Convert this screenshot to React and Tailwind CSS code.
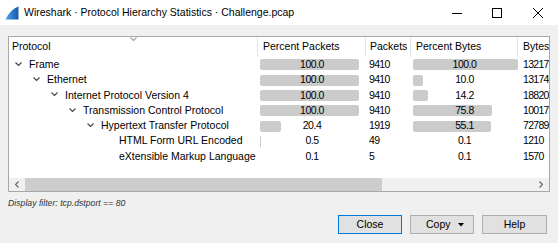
import React from "react";

const rows = [
  { name: "Frame", level: 0, exp: true, pp: "100.0", ppw: 99, pk: "9410", pb: "100.0", pbw: 105, b: "13217842" },
  { name: "Ethernet", level: 1, exp: true, pp: "100.0", ppw: 99, pk: "9410", pb: "10.0", pbw: 10, b: "1317400" },
  { name: "Internet Protocol Version 4", level: 2, exp: true, pp: "100.0", ppw: 99, pk: "9410", pb: "14.2", pbw: 15, b: "1882000" },
  { name: "Transmission Control Protocol", level: 3, exp: true, pp: "100.0", ppw: 99, pk: "9410", pb: "75.8", pbw: 79, b: "10017530" },
  { name: "Hypertext Transfer Protocol", level: 4, exp: true, pp: "20.4", ppw: 21, pk: "1919", pb: "55.1", pbw: 78, b: "7278906" },
  { name: "HTML Form URL Encoded", level: 5, exp: false, pp: "0.5", ppw: 0.6, pk: "49", pb: "0.1", pbw: 0, b: "1210" },
  { name: "eXtensible Markup Language", level: 5, exp: false, pp: "0.1", ppw: 0, pk: "5", pb: "0.1", pbw: 0, b: "1570" },
];

const indent = ["pl-[6px]", "pl-[24px]", "pl-[42px]", "pl-[60px]", "pl-[78px]", "pl-[96px]"];

const gridCols = "grid grid-cols-[249px_108px_45px_107px_1fr]";

function Chevron({ color = "#444" }) {
  return (
    <svg width="7" height="4" viewBox="0 0 7 4" className="block">
      <polyline points="0.5,0.5 3.5,3.5 6.5,0.5" fill="none" stroke={color} strokeWidth="1.1" />
    </svg>
  );
}

function Fin() {
  return (
    <svg width="14" height="14" viewBox="0 0 14 14" className="block">
      <defs>
        <linearGradient id="fing" x1="0" y1="0" x2="1" y2="0">
          <stop offset="0" stopColor="#5aa6e6" />
          <stop offset="0.55" stopColor="#2a78cc" />
          <stop offset="1" stopColor="#1a5aa8" />
        </linearGradient>
      </defs>
      <path d="M0.5 13.5 C 3 8, 7 3, 13.5 0.5 L 13.5 13.5 Z" fill="url(#fing)" />
    </svg>
  );
}

function Bar({ w }) {
  return (
    <div
      className="col-start-1 row-start-1 self-center ml-[2px] h-[11px] bg-[#cbcbcb] rounded-[2px]"
      style={{ width: `${w}px` }}
    />
  );
}

export default function App() {
  return (
    <div
      className="w-[558px] h-[243px] bg-[#f0f0f0] flex flex-col overflow-hidden text-black text-[10.5px]"
      style={{ fontFamily: '"Liberation Sans", Arial, sans-serif' }}
    >
      {/* Title bar */}
      <div className="h-[25px] bg-white flex items-center shrink-0">
        <div className="ml-[5px]">
          <Fin />
        </div>
        <div className="ml-[5px] text-[10.5px] leading-none">
          Wireshark · Protocol Hierarchy Statistics · Challenge.pcap
        </div>
        <div className="flex-1" />
        <div className="w-[40px] h-full flex items-center justify-center">
          <svg width="10" height="10" viewBox="0 0 10 10" className="block">
            <line x1="0" y1="5.5" x2="10" y2="5.5" stroke="#000" strokeWidth="1" />
          </svg>
        </div>
        <div className="w-[40px] h-full flex items-center justify-center">
          <svg width="10" height="10" viewBox="0 0 10 10" className="block">
            <rect x="0.5" y="0.5" width="9" height="9" fill="none" stroke="#000" strokeWidth="1" />
          </svg>
        </div>
        <div className="w-[41px] h-full flex items-center justify-center">
          <svg width="10" height="10" viewBox="0 0 10 10" className="block">
            <line x1="0" y1="0" x2="10" y2="10" stroke="#000" strokeWidth="1" />
            <line x1="10" y1="0" x2="0" y2="10" stroke="#000" strokeWidth="1" />
          </svg>
        </div>
      </div>

      {/* Table box */}
      <div className="mt-[11px] mx-[8px] h-[156px] border border-[#a8a8a8] bg-white flex flex-col overflow-hidden shrink-0">
        {/* Header */}
        <div className={`${gridCols} h-[20px] shrink-0`}>
          <div className="grid border-r border-[#e5e5e5]">
            <div className="col-start-1 row-start-1 justify-self-center self-start mt-[0px]">
              <Chevron color="#a0a0a0" />
            </div>
            <div className="col-start-1 row-start-1 self-center pl-[3px] whitespace-nowrap">Protocol</div>
          </div>
          <div className="flex items-center pl-[5px] border-r border-[#e5e5e5] whitespace-nowrap">Percent Packets</div>
          <div className="flex items-center pl-[4px] border-r border-[#e5e5e5] whitespace-nowrap overflow-hidden">Packets</div>
          <div className="flex items-center pl-[5px] border-r border-[#e5e5e5] whitespace-nowrap">Percent Bytes</div>
          <div className="flex items-center pl-[5px] whitespace-nowrap overflow-hidden">Bytes</div>
        </div>

        {/* Rows */}
        {rows.map((r) => (
          <div key={r.name} className={`${gridCols} h-[15.3px] shrink-0`}>
            <div className={`flex items-center ${indent[r.level]} whitespace-nowrap overflow-hidden`}>
              <div className="w-[14px] shrink-0 flex items-center -mt-[2px]">{r.exp ? <Chevron /> : null}</div>
              <span>{r.name}</span>
            </div>
            <div className="grid">
              <Bar w={r.ppw} />
              <div className="col-start-1 row-start-1 self-center text-center tracking-[-0.5px]">{r.pp}</div>
            </div>
            <div className="flex items-center pl-[3px] tracking-[-0.7px]">{r.pk}</div>
            <div className="grid">
              <Bar w={r.pbw} />
              <div className="col-start-1 row-start-1 self-center text-center tracking-[-0.5px]">{r.pb}</div>
            </div>
            <div className="flex items-center pl-[5px] whitespace-nowrap overflow-hidden tracking-[-0.7px]">{r.b}</div>
          </div>
        ))}

        <div className="flex-1" />

        {/* Horizontal scrollbar */}
        <div className="h-[13px] flex shrink-0 bg-[#f0f0f0]">
          <div className="w-[16px] flex items-center justify-center">
            <svg width="4" height="7" viewBox="0 0 4 7" className="block">
              <polyline points="3.5,0.5 0.5,3.5 3.5,6.5" fill="none" stroke="#606060" strokeWidth="1.1" />
            </svg>
          </div>
          <div className="w-[357px] bg-[#cdcdcd]" />
          <div className="flex-1" />
          <div className="w-[16px] flex items-center justify-center">
            <svg width="4" height="7" viewBox="0 0 4 7" className="block">
              <polyline points="0.5,0.5 3.5,3.5 0.5,6.5" fill="none" stroke="#606060" strokeWidth="1.1" />
            </svg>
          </div>
        </div>
      </div>

      {/* Display filter */}
      <div className="mt-[4px] ml-[8px] h-[14px] leading-[14px] text-[8.7px] italic text-[#333] whitespace-nowrap">
        Display filter: tcp.dstport == 80
      </div>

      {/* Buttons */}
      <div className="mt-[5px] flex justify-end pr-[11px] gap-[8px]">
        <div className="w-[64px] h-[19px] bg-[#e1e1e1] border border-[#0078d7] flex items-center justify-center">
          Close
        </div>
        <div className="w-[64px] h-[19px] bg-[#e1e1e1] border border-[#adadad] flex items-center">
          <span className="ml-[15px]">Copy</span>
          <div className="flex-1" />
          <svg width="6" height="4" viewBox="0 0 6 4" className="block mr-[9px]">
            <polygon points="0,0 6,0 3,3.5" fill="#000" />
          </svg>
        </div>
        <div className="w-[65px] h-[19px] bg-[#e1e1e1] border border-[#adadad] flex items-center justify-center">
          Help
        </div>
      </div>
    </div>
  );
}
